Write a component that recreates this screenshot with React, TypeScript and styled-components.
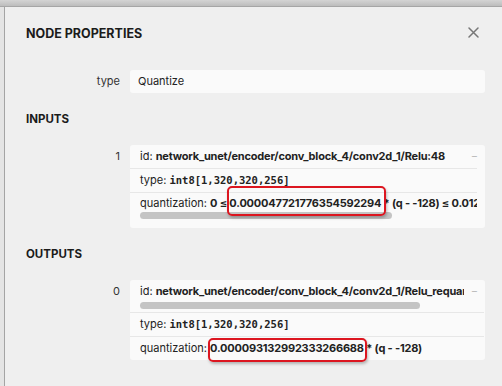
import React from 'react'
import styled, { createGlobalStyle } from 'styled-components'

const GlobalStyle = createGlobalStyle`
  html, body {
    margin: 0;
    padding: 0;
    background: #efefef;
  }
  body {
    font-family: Inter, "Liberation Sans", Arial, sans-serif;
    color: #222;
  }
`

const Screen = styled.div`
  width: 502px;
  height: 386px;
  display: flex;
  flex-direction: column;
  overflow: hidden;
  background: #efefef;
`

const TopBar = styled.div`
  flex: none;
  height: 6px;
  background: linear-gradient(#d4d4d4, #bdbdbd);
  border-bottom: 1px solid #a6a6a6;
`

const Body = styled.div`
  display: flex;
  flex: 1;
  min-height: 0;
`

const LeftEdge = styled.div`
  flex: none;
  width: 4px;
  background: #e4e4e4;
  border-right: 1px solid #a4a4a4;
`

const Panel = styled.div`
  flex: 1;
  min-width: 0;
  padding: 20px 17px 0 21px;
`

const Header = styled.div`
  display: flex;
  align-items: center;
  justify-content: space-between;
  height: 14px;
`

const Title = styled.h1`
  margin: 0;
  font-size: 12.5px;
  line-height: 14px;
  font-weight: 700;
  color: #1b1b1b;
`

const CloseButton = styled.button`
  display: flex;
  align-items: center;
  justify-content: center;
  width: 11px;
  height: 11px;
  margin: -3px 6px 0 0;
  padding: 0;
  border: none;
  background: none;
  color: #777;
`

const Section = styled.h2`
  margin: 19px 0 0;
  font-size: 11.5px;
  line-height: 14px;
  font-weight: 700;
  color: #1b1b1b;
`

const Row = styled.div<{ $gap: number }>`
  display: grid;
  grid-template-columns: 94px minmax(0, 1fr);
  column-gap: 10px;
  margin-top: ${({ $gap }) => $gap}px;
`

const Label = styled.div`
  text-align: right;
  font-size: 11px;
  line-height: 23px;
  color: #333;
`

const ValueBox = styled.div`
  position: relative;
  min-width: 0;
  background: #fafafa;
  border-radius: 3px;
`

const PlainValue = styled.div`
  padding: 0 8px;
  font-size: 11px;
  line-height: 23px;
`

const Line = styled.div<{ $border?: boolean; $end: number; $pad?: number }>`
  margin-right: ${({ $end }) => $end}px;
  padding: 0 0 ${({ $pad }) => $pad ?? 0}px 10px;
  border-top: ${({ $border }) => ($border ? '1px solid #e7e7e7' : 'none')};
  overflow-x: clip;
  overflow-y: visible;
`

const LineText = styled.div<{ $height?: number }>`
  font-size: 11px;
  line-height: ${({ $height }) => $height ?? 23}px;
  white-space: nowrap;
`

const Thumb = styled.div<{ $width: number; $shift: number }>`
  width: ${({ $width }) => $width}px;
  height: 7px;
  margin-top: ${({ $shift }) => $shift}px;
  border-radius: 4px;
  background: #c4c4c4;
`

const Expander = styled.span`
  position: absolute;
  top: 0;
  right: 7px;
  font-size: 11px;
  line-height: 23px;
  color: #bdbdbd;
`

const Strong = styled.b`
  font-weight: 700;
  letter-spacing: -0.2px;
`

const Mono = styled.span`
  font-family: "DejaVu Sans Mono", "Liberation Mono", monospace;
  font-size: 10.5px;
  font-weight: 700;
`

type Frame = { top: number; bottom: number; left: number; right: number }

const Highlight = styled.span<{ $frame: Frame }>`
  position: relative;
  &::after {
    content: '';
    position: absolute;
    top: ${({ $frame }) => -$frame.top}px;
    bottom: ${({ $frame }) => -$frame.bottom}px;
    left: ${({ $frame }) => -$frame.left}px;
    right: ${({ $frame }) => -$frame.right}px;
    border: 2.5px solid #dc1620;
    border-radius: 5px;
    box-shadow: 1px 2px 3px rgba(0, 0, 0, 0.25);
  }
`

const CloseIcon = () => (
  <svg width="11" height="11" viewBox="0 0 11 11">
    <path d="M1 1 L10 10 M10 1 L1 10" stroke="currentColor" strokeWidth="1.5" strokeLinecap="round" />
  </svg>
)

const App: React.FC = () => {
  return (
    <Screen>
      <GlobalStyle />
      <TopBar />
      <Body>
        <LeftEdge />
        <Panel>
          <Header>
            <Title>NODE PROPERTIES</Title>
            <CloseButton aria-label="close">
              <CloseIcon />
            </CloseButton>
          </Header>

          <Row $gap={29}>
            <Label>type</Label>
            <ValueBox>
              <PlainValue>Quantize</PlainValue>
            </ValueBox>
          </Row>

          {/* Inputs */}
          <Section>INPUTS</Section>
          <Row $gap={19}>
            <Label>1</Label>
            <ValueBox>
              <Expander>−</Expander>
              <Line $end={8}>
                <LineText>
                  id: <Strong>network_unet/encoder/conv_block_4/conv2d_1/Relu:48</Strong>
                </LineText>
              </Line>
              <Line $border $end={8}>
                <LineText>
                  type: <Mono>int8[1,320,320,256]</Mono>
                </LineText>
              </Line>
              <Line $border $end={8} $pad={9}>
                <LineText $height={21}>
                  quantization: <Strong>0 ≤ </Strong>
                  <Highlight $frame={{ top: 10, bottom: 6, left: 2, right: 5 }}>
                    <Strong>0.000047721776354592294</Strong>
                  </Highlight>
                  <Strong> * (q - -128) ≤ 0.012169053545570374</Strong>
                </LineText>
                <Thumb $width={252} $shift={-2} />
              </Line>
            </ValueBox>
          </Row>

          {/* Outputs */}
          <Section>OUTPUTS</Section>
          <Row $gap={19}>
            <Label>0</Label>
            <ValueBox>
              <Expander>−</Expander>
              <Line $end={21} $pad={3}>
                <LineText>
                  id: <Strong>network_unet/encoder/conv_block_4/conv2d_1/Relu_requantized</Strong>
                </LineText>
                <Thumb $width={280} $shift={-1} />
              </Line>
              <Line $border $end={1}>
                <LineText>
                  type: <Mono>int8[1,320,320,256]</Mono>
                </LineText>
              </Line>
              <Line $border $end={1}>
                <LineText>
                  quantization:{' '}
                  <Highlight $frame={{ top: 3, bottom: 7, left: 2, right: 3 }}>
                    <Strong>0.000093132992333266688</Strong>
                  </Highlight>
                  <Strong> * (q - -128)</Strong>
                </LineText>
              </Line>
            </ValueBox>
          </Row>
        </Panel>
      </Body>
    </Screen>
  )
}

export default App
